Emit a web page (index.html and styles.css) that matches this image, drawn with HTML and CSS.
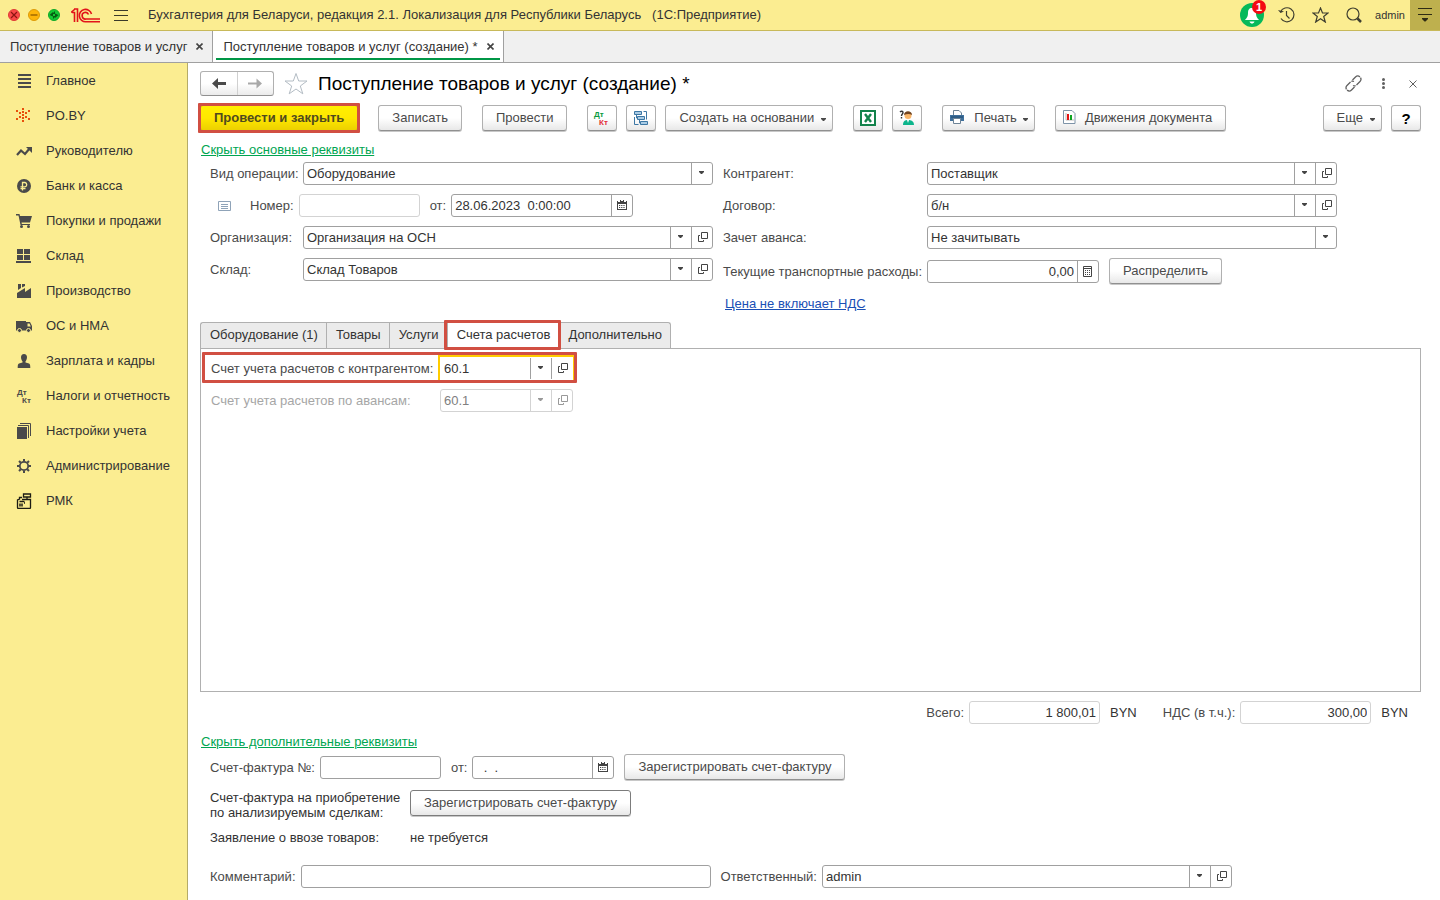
FILE: index.html
```html
<!DOCTYPE html>
<html lang="ru">
<head>
  <meta charset="UTF-8" />
  <title>Поступление товаров и услуг (создание) *</title>
  <meta name="viewport" content="width=device-width, initial-scale=1" />
  <link rel="stylesheet" href="styles.css">
</head>
<body>
  <!-- общие иконки полей -->
  <svg class="sprite" aria-hidden="true">
    <symbol id="i-drop" viewBox="0 0 5 3"><path d="M0 0h5v1L3 3H2L0 1z" fill="currentColor"/></symbol>
    <symbol id="i-open" viewBox="0 0 10 10"><path d="M3.500.5h6v6h-6zM2 3.500H.5v6h5V8" fill="none" stroke="currentColor"/></symbol>
    <symbol id="i-cal" viewBox="0 0 10 10"><path d="M0 1h1v1h2V0h1v1h2V0h1v2h2V1h1v9H0zM1 4v5h8V4z" fill="currentColor" fill-rule="evenodd"/><path d="M2 5.500h6M2 7.500h6" stroke="currentColor" stroke-dasharray="1.200 1"/></symbol>
    <symbol id="i-calc" viewBox="0 0 9 11"><path d="M.5.5h8v10h-8zM1 2.500h7" fill="none" stroke="currentColor"/><path d="M2 4.500h5M2 6.500h5M2 8.500h5" stroke="currentColor" stroke-dasharray="1 1"/></symbol>
  </svg>

  <header class="topbar">
    <div class="window-btns">
      <button aria-label="Закрыть"><svg width="12" height="12"><circle cx="6" cy="6" r="5.500" fill="#fb4948" stroke="#dd3b36"/><path d="M3 3l6 6M9 3l-6 6" stroke="#8c1512" stroke-width="1.200"/></svg></button>
      <button aria-label="Свернуть"><svg width="12" height="12"><circle cx="6" cy="6" r="5.500" fill="#fdb50b" stroke="#dd9a08"/><path d="M2.500 6h7" stroke="#a06a00" stroke-width="1.500"/></svg></button>
      <button aria-label="Развернуть"><svg width="12" height="12"><circle cx="6" cy="6" r="5.500" fill="#14c834" stroke="#10a829"/><path d="M1.500 6L5 3v4.500zM10.500 6L7 9V4.500zM5 4l2-2v3H5zM7 8l-2 2V7h2z" fill="#075b12"/></svg></button>
    </div>
    <svg class="logo" width="30" height="15" viewBox="0 0 30 15" fill="none" stroke="#e2131a" role="img" aria-label="1С">
      <path d="M0 4.500L3.500 1.500M1 4.500h2.500V14M3 1h3.500v13" stroke-width="1.600"/>
      <path d="M20.500 6A6.200 6.200 0 1 0 15 13.800H29" stroke-width="1.600"/>
      <path d="M17.500 6.500A3.300 3.300 0 1 0 15 11H29" stroke-width="1.600"/>
    </svg>
    <button class="burger" aria-label="Меню"><svg width="14" height="11" stroke="#3a3a2a"><path d="M0 .5h14M0 5.500h14M0 10.500h14"/></svg></button>
    <div class="app-title">Бухгалтерия для Беларуси, редакция 2.1. Локализация для Республики Беларусь   (1С:Предприятие)</div>
    <div class="top-tools">
      <button class="bell" aria-label="Уведомления">
        <svg width="24" height="24"><circle cx="12" cy="12" r="12" fill="#06b95a"/><path d="M12 5c-3 0-4 2-4 5 0 4-1.500 5-3 7h14c-1.500-2-3-3-3-7 0-3-1-5-4-5zM9.500 18.500h5c-.5 1.500-1.500 2-2.500 2s-2-.5-2.500-2z" fill="#fff"/></svg>
        <span class="badge">1</span>
      </button>
      <button aria-label="История"><svg width="17" height="16" fill="none" stroke="#3f3f30" stroke-width="1.200"><path d="M2.500 5A7 7 0 1 1 3 11.500M8.500 4v4.500l3 3"/><path d="M0 3l2.500 3L6 4.500z" fill="#3f3f30" stroke="none"/></svg></button>
      <button aria-label="Избранное"><svg width="17" height="16" fill="none" stroke="#3f3f30" stroke-width="1.200"><path d="M8.500 1l2 5h5.500l-4.300 3.500 1.600 5.500-4.800-3.300L3.700 15l1.600-5.500L1 6h5.500z"/></svg></button>
      <button aria-label="Поиск"><svg width="16" height="16" fill="none" stroke="#3f3f30" stroke-width="1.200"><circle cx="7" cy="7" r="6"/><path d="M11.500 11.500l3.500 3.500" stroke-width="2.500"/></svg></button>
      <a href="#" class="user">admin</a>
      <button class="view-menu" aria-label="Настройки вида"><svg width="14" height="14"><path d="M0 .5h14M0 6.500h14" stroke="#2e2b14"/><path d="M4 10h6v1l-2.500 2.500h-1L4 11z" fill="#2e2b14"/></svg></button>
    </div>
  </header>

  <nav class="window-tabs">
    <div class="window-tab"><a href="#">Поступление товаров и услуг</a><button aria-label="Закрыть вкладку"><svg width="7" height="7"><path d="M.5.5l6 6M6.500.5l-6 6" stroke="#444" stroke-width="1.600"/></svg></button></div>
    <div class="window-tab active"><a href="#">Поступление товаров и услуг (создание) *</a><button aria-label="Закрыть вкладку"><svg width="7" height="7"><path d="M.5.5l6 6M6.500.5l-6 6" stroke="#444" stroke-width="1.600"/></svg></button></div>
  </nav>

  <div class="workspace">
    <aside class="sidebar">
      <a href="#"><svg width="16" height="16" fill="#4a4a4a"><path d="M2 1h13v2H2zM2 5h13v2H2zM2 9h13v2H2zM2 13h13v2H2z"/></svg>Главное</a>
      <a href="#"><svg width="16" height="16" fill="#e8500c"><path d="M6 0h2v2H6zM6 3h2v2H6zM6 6h2v2H6zM6 9h2v2H6zM6 12h2v2H6zM0 2h2v2H0zM3 4h2v2H3zM3 8h2v2H3zM0 10h2v2H0zM12 2h2v2h-2zM9 4h2v2H9zM9 8h2v2H9zM12 10h2v2h-2z"/></svg>PO.BY</a>
      <a href="#"><svg width="16" height="16"><path d="M1 12l4-4.500 4 3.500 5-6" fill="none" stroke="#4a4a4a" stroke-width="2.200"/><path d="M10 4h6v6z" fill="#4a4a4a"/></svg>Руководителю</a>
      <a href="#"><svg width="16" height="16"><circle cx="8" cy="8" r="7" fill="#4a4a4a"/><path d="M6.500 12.500V4.500H9a2.200 2.200 0 0 1 0 4.300H4.500M4.500 10.700h5" fill="none" stroke="#fbed91" stroke-width="1.300"/></svg>Банк и касса</a>
      <a href="#"><svg width="16" height="16" fill="#4a4a4a"><path d="M0 1h3.500l.5 2h12l-2 6.500H5.500L5.800 11H14v1H4.500L2.500 2.500H0z"/><circle cx="5.500" cy="13.500" r="1.500"/><circle cx="12.500" cy="13.500" r="1.500"/></svg>Покупки и продажи</a>
      <a href="#"><svg width="16" height="16" fill="#4a4a4a"><path d="M1 1h6v5H1zM8 1h6v5H8zM1 7h6v5H1zM8 7h6v5H8zM0 13h15v2H0z"/></svg>Склад</a>
      <a href="#"><svg width="16" height="16" fill="#4a4a4a"><path d="M1 15V10l8-5v4l6-4v10zM2 1h3v4L2 7zM6 1h3v2L6 4.500z"/></svg>Производство</a>
      <a href="#"><svg width="16" height="16"><path d="M0 3h10v1h4l2 4v4.500H0z" fill="#4a4a4a"/><path d="M11.500 5.500h2l1.300 3h-3.300z" fill="#fbed91"/><g fill="#4a4a4a" stroke="#fbed91"><circle cx="3.500" cy="12.500" r="2"/><circle cx="12.500" cy="12.500" r="2"/></g></svg>ОС и НМА</a>
      <a href="#"><svg width="16" height="16" fill="#4a4a4a"><path d="M8 1c2 0 3 1.300 3 3.200C11 6.500 9.800 8 9.500 8.300v1.200l3.500 1c1 .5 1.300 1.500 1.300 4.500H1.700c0-3 .3-4 1.300-4.500l3.500-1V8.300C6.200 8 5 6.500 5 4.200 5 2.300 6 1 8 1z"/></svg>Зарплата и кадры</a>
      <a href="#"><svg width="16" height="16" fill="#4a4a4a" class="dtkt"><text x="1" y="7">Дт</text><text x="6" y="15">Кт</text></svg>Налоги и отчетность</a>
      <a href="#"><svg width="16" height="16"><path d="M1 4h10v12H1z" fill="#4a4a4a"/><path d="M2 2.500h10.500V15M4 .5h10.500V13" fill="none" stroke="#4a4a4a"/></svg>Настройки учета</a>
      <a href="#"><svg width="16" height="16" fill="none" stroke="#4a4a4a"><circle cx="8" cy="8" r="4.200" stroke-width="1.800"/><path d="M8 1v2.500M8 12.500V15M1 8h2.500M12.500 8H15M3 3l1.800 1.800M11.200 11.200L13 13M13 3l-1.800 1.800M4.800 11.200L3 13" stroke-width="2"/></svg>Администрирование</a>
      <a href="#"><svg width="16" height="16" fill="none" stroke="#1c1c14" stroke-width="1.300"><path d="M7.500 1h7v3h-7zM11 4v2M6 4.500H3.500V6L1.500 7v7.500a1 1 0 0 0 1 1h11a1 1 0 0 0 1-1V6.500H6"/><path d="M3.500 8.500h5M4 10.500v3M6 10.500v3M8 10h1" stroke-width="1.500"/></svg>РМК</a>
    </aside>

    <main class="document">
      <div class="title-row">
        <div class="history-btns">
          <button aria-label="Назад"><svg width="14" height="11"><path d="M0 5.500L6 0v4h8v3H6v4z" fill="#4a4a4a"/></svg></button>
          <button aria-label="Вперед"><svg width="14" height="11"><path d="M14 5.500L8.500.5v4H0v2h8.500v4z" fill="#a9a9a9"/></svg></button>
        </div>
        <button class="plain" aria-label="В избранное"><svg width="24" height="23" fill="none" stroke="#b3bcc4"><path d="M12 1.500l2.700 7.500h8.300l-6.700 5 2.500 7.800L12 17l-6.800 4.800L7.700 14 1 9h8.300z"/></svg></button>
        <h1>Поступление товаров и услуг (создание) *</h1>
        <div class="title-tools">
          <button aria-label="Ссылка"><svg width="17" height="17" fill="none" stroke="#606060" stroke-width="1.300"><path d="M7.500 5l3-3a3 3 0 0 1 4.500 4.500l-3.500 3.500a3 3 0 0 1-3.500.5M9.500 12l-3 3A3 3 0 0 1 2 10.500L5.500 7A3 3 0 0 1 9 6.500" stroke-dasharray="9 1"/></svg></button>
          <button aria-label="Еще"><svg width="3" height="11" fill="#606060"><circle cx="1.500" cy="1.500" r="1.500"/><circle cx="1.500" cy="5.500" r="1.500"/><circle cx="1.500" cy="9.500" r="1.500"/></svg></button>
          <button aria-label="Закрыть форму"><svg width="8" height="8"><path d="M.5.5l7 7M7.500.5l-7 7" stroke="#606060"/></svg></button>
        </div>
      </div>

      <div class="commands">
        <button class="btn primary marked">Провести и закрыть</button>
        <button class="btn">Записать</button>
        <button class="btn">Провести</button>
        <div class="btn-group">
          <button class="btn icon" aria-label="Показать проводки"><svg width="18" height="18" class="dtkt"><text x="1" y="8" fill="#0b9a41">Дт</text><text x="6" y="16" fill="#e22f36">Кт</text></svg></button>
          <button class="btn icon" aria-label="Структура подчиненности"><svg width="16" height="16" fill="#a9cbe4" stroke="#3c77a5"><path d="M1.500 1.500h7v3h-7zM4.500 6.500h7v3h-7zM7.500 11.500h7v3h-7z"/><path d="M10.500 1.500h3v8M3.500 4.500v3.500h1M6.500 9.500v3.500h1M1.500 7v7.500h4" fill="none"/></svg></button>
          <button class="btn">Создать на основании<svg class="caret"><use href="#i-drop"/></svg></button>
        </div>
        <div class="btn-group">
          <button class="btn icon" aria-label="Загрузить из Excel"><svg width="16" height="16"><path d="M1 1h14v14H1z" fill="#fff" stroke="#12824b" stroke-width="2"/><path d="M5 4l6 8M11 4l-6 8" stroke="#12824b" stroke-width="2.400"/></svg></button>
          <button class="btn icon" aria-label="Консультация"><svg width="16" height="16"><path d="M1 2c1-1 3-1 3 .5S2.500 4 2.500 6M2.500 7v1.500" fill="none" stroke="#333" stroke-width="1.400"/><circle cx="9" cy="5.500" r="3.500" fill="#f9b568"/><path d="M5 5C5 0 13 0 13 5 11 3.500 8 3.500 5 5z" fill="#70431f"/><path d="M4 15c0-4 2-5 5-5s6 1 6 5z" fill="#0db58c"/><path d="M8 10h2l-1 3z" fill="#fff"/></svg></button>
        </div>
        <button class="btn with-icon"><svg width="15" height="14"><path d="M3.500 5V.5H9L11.500 3v2" fill="#fff" stroke="#6d8396"/><path d="M0 5h14v6H0z" fill="#3f709c"/><path d="M1 7h12" stroke="#1f4a70"/><path d="M3.500 8.500h7v5h-7z" fill="#fff" stroke="#6d8396"/></svg>Печать<svg class="caret"><use href="#i-drop"/></svg></button>
        <button class="btn with-icon"><svg width="13" height="14"><path d="M.5.5H9L12 3.500v10H.5z" fill="#fff" stroke="#7d93a8"/><path d="M3 3v7h8" fill="none" stroke="#bbb"/><path d="M4 4h2v6H4z" fill="#e31313"/><path d="M7 5h2v5H7z" fill="#0fa422"/></svg>Движения документа</button>
        <div class="btn-group right">
          <button class="btn">Еще<svg class="caret"><use href="#i-drop"/></svg></button>
          <button class="btn icon help" aria-label="Справка">?</button>
        </div>
      </div>

      <a href="#" class="toggle-link">Скрыть основные реквизиты</a>

      <div class="form">
        <div class="form-col left">
          <div class="row">
            <label for="operation">Вид операции:</label>
            <div class="field grow"><select id="operation"><option>Оборудование</option></select><button aria-label="Выбрать"><svg class="drop"><use href="#i-drop"/></svg></button></div>
          </div>
          <div class="row number-row">
            <svg class="list-icon" width="13" height="10" fill="none" stroke="#8fa3b8"><path d="M.5.5h12v9H.5zM3 3.500h7M3 5.500h7M3 7.500h7"/></svg>
            <label for="number" class="tight">Номер:</label>
            <div class="field readonly w-number"><input id="number" type="text" readonly></div>
            <label for="date" class="tight next">от:</label>
            <div class="field w-date"><input id="date" type="text" value="28.06.2023  0:00:00"><button aria-label="Календарь"><svg class="cal"><use href="#i-cal"/></svg></button></div>
          </div>
          <div class="row">
            <label for="org">Организация:</label>
            <div class="field grow"><select id="org"><option>Организация на ОСН</option></select><button aria-label="Выбрать"><svg class="drop"><use href="#i-drop"/></svg></button><button aria-label="Открыть"><svg class="open"><use href="#i-open"/></svg></button></div>
          </div>
          <div class="row">
            <label for="store">Склад:</label>
            <div class="field grow"><select id="store"><option>Склад Товаров</option></select><button aria-label="Выбрать"><svg class="drop"><use href="#i-drop"/></svg></button><button aria-label="Открыть"><svg class="open"><use href="#i-open"/></svg></button></div>
          </div>
        </div>

        <div class="form-col">
          <div class="row">
            <label for="partner">Контрагент:</label>
            <div class="field grow"><select id="partner"><option>Поставщик</option></select><button aria-label="Выбрать"><svg class="drop"><use href="#i-drop"/></svg></button><button aria-label="Открыть"><svg class="open"><use href="#i-open"/></svg></button></div>
          </div>
          <div class="row">
            <label for="contract">Договор:</label>
            <div class="field grow"><select id="contract"><option>б/н</option></select><button aria-label="Выбрать"><svg class="drop"><use href="#i-drop"/></svg></button><button aria-label="Открыть"><svg class="open"><use href="#i-open"/></svg></button></div>
          </div>
          <div class="row">
            <label for="advance">Зачет аванса:</label>
            <div class="field grow"><select id="advance"><option>Не зачитывать</option></select><button aria-label="Выбрать"><svg class="drop"><use href="#i-drop"/></svg></button></div>
          </div>
          <div class="row">
            <label for="transport">Текущие транспортные расходы:</label>
            <div class="field w-sum"><input id="transport" class="num" type="text" value="0,00"><button aria-label="Калькулятор"><svg class="calc"><use href="#i-calc"/></svg></button></div>
            <button class="btn after">Распределить</button>
          </div>
          <a href="#" class="price-link">Цена не включает НДС</a>
        </div>
      </div>

      <div class="tabs" role="tablist">
        <button role="tab">Оборудование (1)</button>
        <button role="tab">Товары</button>
        <button role="tab">Услуги</button>
        <button role="tab" class="active marked" aria-selected="true">Счета расчетов</button>
        <button role="tab">Дополнительно</button>
      </div>
      <section class="tab-panel">
        <div class="row marked account-row">
          <label for="acc">Счет учета расчетов с контрагентом:</label>
          <div class="field w-account focused"><select id="acc"><option>60.1</option></select><button aria-label="Выбрать"><svg class="drop"><use href="#i-drop"/></svg></button><button aria-label="Открыть"><svg class="open"><use href="#i-open"/></svg></button></div>
        </div>
        <div class="row account-row off">
          <label for="acc-adv">Счет учета расчетов по авансам:</label>
          <div class="field w-account readonly"><select id="acc-adv" disabled><option>60.1</option></select><button disabled aria-label="Выбрать"><svg class="drop"><use href="#i-drop"/></svg></button><button disabled aria-label="Открыть"><svg class="open"><use href="#i-open"/></svg></button></div>
        </div>
      </section>

      <div class="row totals">
        <label for="total" class="tight">Всего:</label>
        <div class="field readonly w-total"><input id="total" class="num" type="text" value="1 800,01" readonly></div>
        <span class="currency">BYN</span>
        <label for="vat" class="tight vat">НДС (в т.ч.):</label>
        <div class="field readonly w-total"><input id="vat" class="num" type="text" value="300,00" readonly></div>
        <span class="currency">BYN</span>
      </div>

      <a href="#" class="toggle-link extra">Скрыть дополнительные реквизиты</a>

      <div class="details">
        <div class="row">
          <label for="invoice" class="tight">Счет-фактура №:</label>
          <div class="field w-number"><input id="invoice" type="text"></div>
          <label for="invoice-date" class="tight next">от:</label>
          <div class="field w-invoice-date"><input id="invoice-date" type="text" value="  .  ."><button aria-label="Календарь"><svg class="cal"><use href="#i-cal"/></svg></button></div>
          <button class="btn after">Зарегистрировать счет-фактуру</button>
        </div>
        <div class="row dark">
          <span class="caption">Счет-фактура на приобретение<br>по анализируемым сделкам:</span>
          <button class="btn strong">Зарегистрировать счет-фактуру</button>
        </div>
        <div class="row dark">
          <span class="caption">Заявление о ввозе товаров:</span>
          <span>не требуется</span>
        </div>
        <div class="row comment-row">
          <label for="comment" class="tight">Комментарий:</label>
          <div class="field grow"><input id="comment" type="text"></div>
          <label for="owner" class="tight next">Ответственный:</label>
          <div class="field grow"><select id="owner"><option>admin</option></select><button aria-label="Выбрать"><svg class="drop"><use href="#i-drop"/></svg></button><button aria-label="Открыть"><svg class="open"><use href="#i-open"/></svg></button></div>
        </div>
      </div>
    </main>
  </div>
</body>
</html>
```

FILE: styles.css
```css
* { box-sizing: border-box; }

body {
  margin: 0;
  min-height: 100vh;
  display: flex;
  flex-direction: column;
  font: 13px/15px "Liberation Sans", Arial, sans-serif;
  color: #4a4a4a;
  background: #fff;
}
button, input, select {
  font: inherit;
  color: inherit;
  margin: 0;
}
button {
  border: none;
  background: none;
  padding: 0;
  cursor: pointer;
}
a { color: inherit; text-decoration: none; }
svg { display: block; flex: none; }
.sprite { position: absolute; width: 0; height: 0; }

/* верхняя панель */
.topbar {
  display: flex;
  align-items: center;
  height: 31px;
  padding-left: 8px;
  background: #fbed91;
  border-bottom: 1px solid #c8b95a;
  color: #333;
}
.window-btns { display: flex; gap: 8px; }
.logo { margin-left: 11px; }
.burger { margin-left: 13px; }
.app-title { margin-left: 20px; padding-bottom: 1px; white-space: pre; }
.top-tools {
  display: flex;
  align-items: center;
  align-self: stretch;
  margin-left: auto;
}
.top-tools button { margin-right: 17px; }
.top-tools .bell { position: relative; margin-right: 14px; }
.badge {
  position: absolute;
  top: -3px;
  right: -2px;
  width: 14px;
  height: 14px;
  border-radius: 50%;
  background: #f40a12;
  color: #fff;
  font-size: 11px;
  line-height: 14px;
  font-weight: bold;
}
.top-tools .user { font-size: 11px; margin: 0 5px 0 -4px; }
.top-tools .view-menu {
  display: flex;
  align-items: center;
  justify-content: center;
  align-self: stretch;
  width: 30px;
  margin: 0;
  background: #beb04e;
}

/* открытые окна */
.window-tabs {
  display: flex;
  height: 32px;
  background: #f0f0f0;
  border-bottom: 1px solid #a0a0a0;
  color: #333;
}
.window-tab {
  display: flex;
  align-items: center;
  gap: 9px;
  padding: 0 9px 0 10px;
  border-right: 1px solid #a0a0a0;
}
.window-tab.active {
  position: relative;
  background: #fff;
}
.window-tab.active::after {
  content: "";
  position: absolute;
  left: 3px;
  right: 3px;
  bottom: 2px;
  height: 2px;
  background: #009646;
}

.workspace { flex: 1; display: flex; }

.sidebar {
  flex: none;
  width: 188px;
  background: #fbed91;
  border-right: 1px solid #b5ab68;
  color: #333;
}
.sidebar a {
  display: flex;
  align-items: center;
  gap: 14px;
  height: 35px;
  padding-left: 16px;
}
.dtkt { font: bold 8px/8px "Liberation Sans", Arial, sans-serif; }

.document {
  flex: 1;
  min-width: 0;
  display: flex;
  flex-direction: column;
  padding: 8px 19px 12px 12px;
}

/* заголовок */
.title-row { display: flex; align-items: center; height: 25px; }
.history-btns {
  display: flex;
  width: 74px;
  height: 25px;
  margin-right: 10px;
  border: 1px solid #b0b0b0;
  border-bottom-color: #909090;
  border-radius: 3px;
  background: linear-gradient(#fff 50%, #ebebeb);
}
.history-btns button {
  flex: 1;
  display: flex;
  align-items: center;
  justify-content: center;
}
.history-btns button + button { border-left: 1px solid #d0d0d0; }
h1 {
  margin: 0 0 0 10px;
  font-size: 19px;
  line-height: 25px;
  font-weight: normal;
  color: #000;
}
.title-tools {
  display: flex;
  margin-left: auto;
  margin-right: -7px;
}
.title-tools button {
  display: flex;
  align-items: center;
  justify-content: center;
  width: 30px;
  height: 23px;
}

/* командная панель */
.commands { display: flex; gap: 20px; margin-top: 9px; }
.btn-group { display: flex; gap: 9px; }
.btn-group.right { margin-left: auto; }
.btn {
  display: flex;
  align-items: center;
  height: 26px;
  padding: 0 13px 2px;
  border: 1px solid #b0b0b0;
  border-bottom-color: #909090;
  border-radius: 3px;
  background: linear-gradient(#fff 50%, #e8e8e8);
  box-shadow: 0 1px 0 #c8c8c8;
  white-space: nowrap;
}
.btn.icon { width: 30px; padding: 0; justify-content: center; }
.btn.with-icon { gap: 9px; padding-left: 7px; }
.btn.primary {
  font-weight: bold;
  color: #4f4a1e;
  background: linear-gradient(#ffef00, #ffe800 50%, #ecd000);
  border-color: #d8b400;
}
.btn.help { font-size: 15px; font-weight: bold; color: #000; }
.btn.strong { border-color: #7c7c7c; }
.btn.after { margin-left: 10px; }
.caret { width: 5px; height: 3px; margin: 5px -7px 0 7px; }
.with-icon .caret { margin-left: -3px; }

/* красная рамка-выделение */
.marked { position: relative; }
.marked::after {
  content: "";
  position: absolute;
  inset: -3px;
  border: 3px solid #d14f42;
  border-radius: 1px;
  pointer-events: none;
}

.toggle-link {
  align-self: flex-start;
  margin: 11px 0 5px 1px;
  color: #00a551;
  text-decoration: underline;
}
.toggle-link.extra { margin-top: 10px; }

/* форма */
.form {
  display: grid;
  grid-template-columns: 503fr 614fr;
  gap: 10px;
  max-width: 1137px;
  padding-left: 10px;
}
.form-col {
  display: flex;
  flex-direction: column;
  gap: 9px;
}
.row { display: flex; align-items: center; }
.row label { flex: none; width: 204px; }
.left .row label { width: 93px; }
.row label.tight, .left .row label.tight { width: auto; margin-right: 5px; }
.row label.next { margin-left: 10px; }
.number-row { padding-left: 8px; }
.list-icon { margin-right: 19px; }

.field {
  display: flex;
  flex: none;
  height: 23px;
  border: 1px solid #a0a0a0;
  border-radius: 3px;
  background: #fff;
  color: #333;
}
.field.grow { flex: 1; }
.field input, .field select {
  flex: 1;
  min-width: 0;
  width: 0;
  padding: 0 3px;
  border: none;
  outline: none;
  background: none;
  appearance: none;
  opacity: 1;
}
.field .num { text-align: right; }
.field button {
  display: flex;
  justify-content: center;
  width: 21px;
  padding: 5px 1px 0 0;
  border-left: 1px solid #a0a0a0;
  color: #444;
}
.field.readonly { border-color: #d3d3d3; }
.field.readonly button { border-color: #d3d3d3; color: #999; }
.field.focused {
  border-color: transparent;
  border-radius: 0;
  box-shadow: 0 0 0 2px #ffcc00;
}
.drop { width: 5px; height: 3px; margin-top: 3px; }
.open { width: 10px; height: 10px; margin-left: 2px; }
.cal { width: 10px; height: 10px; }
.calc { width: 9px; height: 11px; }

.w-number { width: 121px; }
.w-date { width: 182px; }
.w-sum { width: 172px; }
.w-account { width: 133px; }
.w-total { width: 131px; }
.w-invoice-date { width: 142px; }

.price-link {
  align-self: flex-start;
  margin: 3px 0 0 2px;
  color: #1a4fb5;
  text-decoration: underline;
}

/* вкладки */
.tabs { display: flex; margin-top: 11px; }
.tabs button {
  height: 26px;
  padding: 0 8px 2px 9px;
  border: 1px solid #b0b0b0;
  border-right: none;
  border-bottom: none;
  background: #ebebeb;
  color: #333;
}
.tabs button:first-child { border-top-left-radius: 3px; }
.tabs button:last-child { border-right: 1px solid #b0b0b0; border-top-right-radius: 3px; }
.tabs .active { background: #fff; z-index: 1; }
.tabs .active::after { inset: -3px -3px -2px -4px; }

.tab-panel {
  flex: 1;
  display: flex;
  flex-direction: column;
  align-items: flex-start;
  gap: 9px;
  min-height: 100px;
  padding: 8px 10px;
  border: 1px solid #b0b0b0;
}
.account-row label { width: 229px; }
.account-row.marked::after { inset: -5px -4px -3px -9px; }
.off label { color: #a6a6a6; }
.off .field { color: #808080; }

.totals { justify-content: flex-end; margin-top: 9px; padding-right: 13px; }
.totals .vat { margin-left: 26px; }
.currency { margin-left: 10px; color: #333; }

.details {
  max-width: 1032px;
  padding-left: 10px;
}
.details .row + .row { margin-top: 10px; }
.details .row.comment-row { margin-top: 20px; }
.row.dark { align-items: flex-start; }
.dark { color: #333; }
.dark .btn { color: #4a4a4a; }
.caption { width: 200px; }
```
